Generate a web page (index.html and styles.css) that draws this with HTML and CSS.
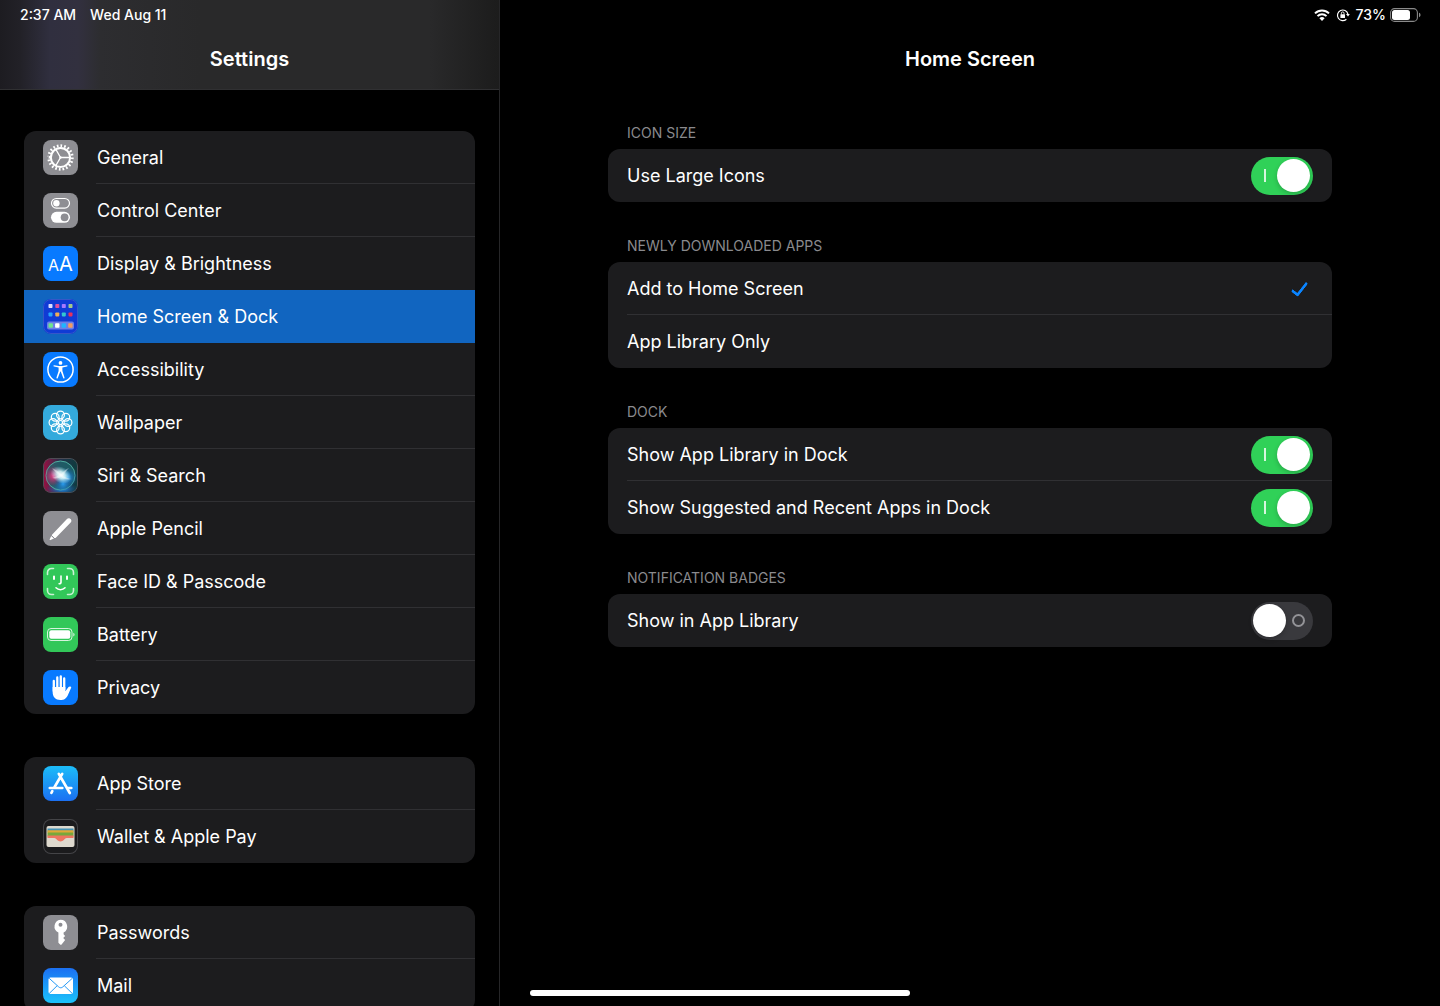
FILE: index.html
```html
<!DOCTYPE html>
<html lang="en">
<head>
  <meta charset="UTF-8">
  <meta name="viewport" content="width=device-width, initial-scale=1.0">
  <title>Settings - Home Screen</title>
  <link rel="stylesheet" href="styles.css">
</head>
<body>
  <div class="app">
    <aside class="sidebar">
      <header class="sidebar-header">
        <div class="status">
          <span>2:37 AM</span>
          <span class="date">Wed Aug 11</span>
        </div>
        <h1>Settings</h1>
      </header>
      <nav class="menu">
        <div class="card">
          <a class="item" href="#general">
            <svg class="icon gray" viewBox="0 0 35 35" fill="none" stroke="#fff">
              <circle cx="17.5" cy="17.5" r="9.6" stroke-width="2"/>
              <circle cx="17.5" cy="17.5" r="11.8" stroke-width="2.8" pathLength="80" stroke-dasharray="1.8 2.2"/>
              <path d="M17.5 17.5H27M17.5 17.5l-4.8-8.3M17.5 17.5l-4.8 8.3" stroke-width="1.3"/>
              <circle cx="17.5" cy="17.5" r="1.2" fill="#fff" stroke="none"/>
            </svg>
            <span class="label">General</span>
          </a>
          <a class="item" href="#control-center">
            <svg class="icon gray" viewBox="0 0 35 35">
              <rect x="8.5" y="5.5" width="18" height="9.6" rx="4.8" fill="none" stroke="#fff" stroke-width="1.2"/>
              <circle cx="13.4" cy="10.3" r="3.2" fill="#fff"/>
              <rect x="8" y="18.8" width="19" height="11" rx="5.5" fill="#fff"/>
              <circle cx="21.6" cy="24.3" r="3.9" fill="#8e8e93"/>
            </svg>
            <span class="label">Control Center</span>
          </a>
          <a class="item" href="#display">
            <span class="icon blue aa" aria-hidden="true"><small>A</small>A</span>
            <span class="label">Display &amp; Brightness</span>
          </a>
          <a class="item active" href="#home-screen" aria-current="page">
            <svg class="icon home" viewBox="0 0 35 35">
              <rect x="4" y="22.5" width="27" height="8" rx="2" fill="#6c7fe6"/>
              <rect x="5.5" y="5" width="4" height="4" rx=".8" fill="#d9dcff"/>
              <rect x="12.3" y="5" width="4" height="4" rx=".8" fill="#e0509c"/>
              <rect x="18.8" y="5" width="4" height="4" rx=".8" fill="#a678ff"/>
              <rect x="25.5" y="5" width="4" height="4" rx=".8" fill="#a3c78a"/>
              <rect x="5.5" y="13.4" width="4" height="4" rx=".8" fill="#24a6ff"/>
              <rect x="12.3" y="13.4" width="4" height="4" rx=".8" fill="#f0ae55"/>
              <rect x="18.8" y="13.4" width="4" height="4" rx=".8" fill="#33c7d0"/>
              <rect x="25.5" y="13.4" width="4" height="4" rx=".8" fill="#e8325c"/>
              <rect x="5.5" y="24.3" width="4.4" height="4.4" rx=".8" fill="#6ee58c"/>
              <rect x="12.1" y="24.3" width="4.4" height="4.4" rx=".8" fill="#fff"/>
              <rect x="18.6" y="24.3" width="4.4" height="4.4" rx=".8" fill="#1fb5ff"/>
              <rect x="25.2" y="24.3" width="4.4" height="4.4" rx=".8" fill="#f29c62"/>
              <rect x=".5" y=".5" width="34" height="34" rx="7.5" fill="none" stroke="#3557c9"/>
            </svg>
            <span class="label">Home Screen &amp; Dock</span>
          </a>
          <a class="item" href="#accessibility">
            <svg class="icon blue" viewBox="0 0 35 35" fill="#fff">
              <circle cx="17.5" cy="17.5" r="12.6" fill="none" stroke="#fff" stroke-width="1.5"/>
              <circle cx="17.5" cy="10.9" r="1.9"/>
              <path d="M11.2 13.2c-.9-.2-1.1 1-.2 1.3l4.6 1.1v3.3l-2.1 6.6c-.3 1 .9 1.4 1.3.4l2.5-6.3h.4l2.5 6.3c.4 1 1.6.6 1.3-.4l-2.1-6.6v-3.3l4.6-1.1c.9-.3.7-1.5-.2-1.3l-4.5.8h-3.6z"/>
            </svg>
            <span class="label">Accessibility</span>
          </a>
          <a class="item" href="#wallpaper">
            <svg class="icon cyan" viewBox="0 0 35 35" fill="none" stroke="#fff" stroke-width="1.2">
              <circle cx="17.5" cy="10" r="3.9"/>
              <circle cx="22.8" cy="12.2" r="3.9"/>
              <circle cx="25" cy="17.5" r="3.9"/>
              <circle cx="22.8" cy="22.8" r="3.9"/>
              <circle cx="17.5" cy="25" r="3.9"/>
              <circle cx="12.2" cy="22.8" r="3.9"/>
              <circle cx="10" cy="17.5" r="3.9"/>
              <circle cx="12.2" cy="12.2" r="3.9"/>
              <circle cx="17.5" cy="17.5" r="2"/>
              <path d="M19 13.800l-.6 1.700M21.200 16l-1.700.6M21.200 19l-1.700-.6M19 21.200l-.6-1.700M16 21.200l.6-1.700M13.800 19l1.700-.6M13.800 16l1.700.6M16 13.800l.6 1.700" stroke-width="1"/>
            </svg>
            <span class="label">Wallpaper</span>
          </a>
          <a class="item" href="#siri">
            <svg class="icon siri" viewBox="0 0 35 35">
              <defs>
                <linearGradient id="siri-bg" x1="0" y1="0" x2="1" y2="0">
                  <stop offset="0" stop-color="#9c0f42"/>
                  <stop offset=".5" stop-color="#23304a"/>
                  <stop offset="1" stop-color="#0d3d3e"/>
                </linearGradient>
                <radialGradient id="siri-pink">
                  <stop offset="0" stop-color="#f0428a"/>
                  <stop offset="1" stop-color="#c01d5f" stop-opacity="0"/>
                </radialGradient>
                <radialGradient id="siri-blue">
                  <stop offset="0" stop-color="#2a9df0"/>
                  <stop offset="1" stop-color="#1256a8" stop-opacity="0"/>
                </radialGradient>
                <radialGradient id="siri-glow">
                  <stop offset="0" stop-color="#fff"/>
                  <stop offset=".4" stop-color="#dff" stop-opacity=".85"/>
                  <stop offset="1" stop-color="#aef" stop-opacity="0"/>
                </radialGradient>
              </defs>
              <rect width="35" height="35" rx="8" fill="url(#siri-bg)"/>
              <ellipse cx="19" cy="31" rx="16" ry="7" fill="url(#siri-blue)"/>
              <circle cx="17.5" cy="17.5" r="14.5" fill="#1f6c72" fill-opacity=".7" stroke="#56b8a8" stroke-width=".9"/>
              <circle cx="10.5" cy="18" r="10" fill="url(#siri-pink)"/>
              <circle cx="24.5" cy="19.5" r="10" fill="url(#siri-blue)"/>
              <circle cx="20" cy="26" r="9" fill="url(#siri-blue)"/>
              <ellipse cx="18" cy="17" rx="11" ry="8" fill="url(#siri-glow)" transform="rotate(30 18 17)"/>
              <path d="M9 10c4 2 8 4 9 7 2-4 5-6 8-7-3 3-5 6-6 8 3 1 6 3 9 3-5 1-9 0-11-2-2 1-5 2-9 1 3-1 6-2 7-3-2-2-5-4-7-7z" fill="#fff" fill-opacity=".4"/>
              <rect x=".5" y=".5" width="34" height="34" rx="7.5" fill="none" stroke="#4d4d55"/>
            </svg>
            <span class="label">Siri &amp; Search</span>
          </a>
          <a class="item" href="#pencil">
            <svg class="icon gray" viewBox="0 0 35 35" fill="#fff">
              <path d="M9 23.7 24.2 7.8c2-2 5.6 1.1 3.7 3.4L12.6 26.9c-1.2 1.1-4.7-2.2-3.6-3.2z"/>
              <path d="m8.2 25 2.8 2.4-3.500 1.700c-.7.2-1-.3-.8-.8z"/>
              <path d="m8.400 24.500 3 2.800" stroke="#8e8e93" stroke-width="1"/>
            </svg>
            <span class="label">Apple Pencil</span>
          </a>
          <a class="item" href="#face-id">
            <svg class="icon green" viewBox="0 0 35 35" fill="none" stroke="#fff" stroke-width="1.6" stroke-linecap="round">
              <path d="M4.5 10.5V8.5a4 4 0 0 1 4-4h2M24.5 4.5h2a4 4 0 0 1 4 4v2M30.5 24.5v2a4 4 0 0 1-4 4h-2M10.5 30.5h-2a4 4 0 0 1-4-4v-2" stroke-opacity=".75"/>
              <path d="M11 12.5v2.500M24 12.500v2.500" stroke-width="2"/>
              <path d="M18 12v6.200c0 1-.6 1.500-1.900 1.500M13 23.800c2.500 2.500 6.500 2.500 9 0"/>
            </svg>
            <span class="label">Face ID &amp; Passcode</span>
          </a>
          <a class="item" href="#battery">
            <svg class="icon green" viewBox="0 0 35 35" fill="#fff">
              <rect x="4.5" y="11.5" width="24.5" height="12" rx="3.5" fill="none" stroke="#fff" stroke-opacity=".8"/>
              <rect x="6.3" y="13.3" width="21" height="8.4" rx="2"/>
              <path d="M30.3 15.7c1.7.5 1.7 3.2 0 3.7z" fill-opacity=".8"/>
            </svg>
            <span class="label">Battery</span>
          </a>
          <a class="item" href="#privacy">
            <svg class="icon blue" viewBox="0 0 35 35">
              <path d="M10.8 11v10M14.3 7.5v11M17.8 6.5v12M21.2 8.5v11" fill="none" stroke="#fff" stroke-width="2.3" stroke-linecap="round"/>
              <path d="M9.65 17h12.7v4.300l3.200-4.200c.9-1.300 3.200-.6 2.600.7l-3 6.600c-1.700 4-4 5.700-7.800 5.700-4.900 0-7.700-3.200-7.700-8z" fill="#fff"/>
            </svg>
            <span class="label">Privacy</span>
          </a>
        </div>
        <div class="card">
          <a class="item" href="#app-store">
            <svg class="icon store" viewBox="0 0 35 35" fill="none" stroke="#fff" stroke-width="2.7" stroke-linecap="round">
              <path d="M15.8 7.8 26.8 27M19.2 7.8 11.6 21M9.300 25.200 8.400 26.800"/>
              <path d="M6.8 22h12.500M24.800 22h3.500"/>
            </svg>
            <span class="label">App Store</span>
          </a>
          <a class="item" href="#wallet">
            <svg class="icon wallet" viewBox="0 0 35 35">
              <rect x="3.5" y="7" width="28" height="21" rx="2" fill="#ded9ce"/>
              <path d="M4.5 9.500h26V13h-26z" fill="#4593b5"/>
              <path d="M4.5 11.300h26v3h-26z" fill="#dfa936"/>
              <path d="M4.5 13.500h26v4h-26z" fill="#76a83c"/>
              <path d="M4.5 16.600h26v2.400h-6.700c-1.700 0-2 1-3 2.100-1.600 1.700-5 1.700-6.600 0-1-1.100-1.300-2.100-3-2.100H4.500z" fill="#ed7561"/>
            </svg>
            <span class="label">Wallet &amp; Apple Pay</span>
          </a>
        </div>
        <div class="card">
          <a class="item" href="#passwords">
            <svg class="icon gray" viewBox="0 0 35 35">
              <path fill="#fff" fill-rule="evenodd" d="M17.5 4.7a6.8 6.8 0 0 1 3.1 12.8v1.700l1.500 1.700-1.900 2 1.900 2.200-3.300 4.200c-.6.8-1.400.7-1.900 0L15.400 27.800V17.600A6.800 6.800 0 0 1 17.500 4.700zm0 3.100a2 2 0 1 0 0 4 2 2 0 0 0 0-4z"/>
            </svg>
            <span class="label">Passwords</span>
          </a>
          <a class="item" href="#mail">
            <svg class="icon mail" viewBox="0 0 35 35">
              <rect x="5.5" y="9.5" width="24.5" height="16.5" rx="2" fill="#fff"/>
              <path d="m6.2 10.300 9.500 8.600c1.300 1.200 2.800 1.200 4.100 0l9.500-8.600M6.200 25.500l8-7.800M29.300 25.500l-8-7.800" fill="none" stroke="#279af5" stroke-width="1"/>
            </svg>
            <span class="label">Mail</span>
          </a>
        </div>
      </nav>
    </aside>

    <main class="content">
      <header class="content-header">
        <div class="status status-right">
          <svg class="wifi" viewBox="0 0 16 12" fill="none" stroke="#fff" stroke-width="2">
            <path d="M1 4.400a10 10 0 0 1 14 0M3.500 7.100a6.400 6.400 0 0 1 9 0"/>
            <path d="M8 12 5.400 9.300a3.700 3.700 0 0 1 5.200 0z" fill="#fff" stroke="none"/>
          </svg>
          <svg class="lock" viewBox="0 0 14 14" fill="none" stroke="#fff" stroke-width="1.200">
            <path d="M10.400 11.200A5.300 5.300 0 1 1 11.900 6"/>
            <path d="m10 6 2 2.600L13.800 6z" fill="#fff" stroke="none"/>
            <rect x="4.400" y="6.300" width="4.600" height="3.600" rx=".5" fill="#fff" stroke="none"/>
            <path d="M5.400 6.500V5.200a1.300 1.300 0 0 1 2.600 0v1.300" stroke-width=".9"/>
          </svg>
          <span>73%</span>
          <svg class="charge" viewBox="0 0 31 14">
            <rect x=".6" y=".6" width="26.800" height="12.800" rx="4" fill="none" stroke="#8a8a8a" stroke-width="1.100"/>
            <rect x="2" y="2" width="18" height="10" rx="2.500" fill="#fff"/>
            <path d="M29 4.800c2 .6 2 3.800 0 4.400z" fill="#8a8a8a"/>
          </svg>
        </div>
        <h2>Home Screen</h2>
      </header>
      <form class="settings">
        <h3>ICON SIZE</h3>
        <div class="card">
          <label class="row">Use Large Icons <input class="toggle" type="checkbox" checked></label>
        </div>
        <h3>NEWLY DOWNLOADED APPS</h3>
        <div class="card">
          <label class="row">Add to Home Screen <input class="check" type="radio" name="new-apps" checked></label>
          <label class="row">App Library Only <input class="check" type="radio" name="new-apps"></label>
        </div>
        <h3>DOCK</h3>
        <div class="card">
          <label class="row">Show App Library in Dock <input class="toggle" type="checkbox" checked></label>
          <label class="row">Show Suggested and Recent Apps in Dock <input class="toggle" type="checkbox" checked></label>
        </div>
        <h3>NOTIFICATION BADGES</h3>
        <div class="card">
          <label class="row">Show in App Library <input class="toggle" type="checkbox"></label>
        </div>
      </form>
    </main>
  </div>
  <div class="home-bar"></div>
</body>
</html>
```
FILE: styles.css
```css
*, *::before, *::after {
  box-sizing: border-box;
}
body {
  margin: 0;
  background: #000;
  color: #fff;
  font-family: Inter, "Liberation Sans", sans-serif;
  font-size: 18px;
}
h1, h2, h3 {
  margin: 0;
}
.app {
  display: flex;
  height: 100vh;
}

/* Headers and status bar */
.status {
  display: flex;
  align-items: center;
  height: 29px;
  padding: 0 19px;
  font-size: 14px;
  font-weight: 500;
}
.sidebar .status {
  padding-left: 20px;
}
.date {
  margin-left: 14px;
}
.status-right {
  justify-content: flex-end;
}
h1, h2 {
  font-size: 20px;
  font-weight: 600;
  line-height: 60px;
  text-align: center;
}
.wifi {
  width: 16px;
  height: 12px;
  margin-right: 6px;
}
.lock {
  width: 14px;
  height: 14px;
  margin-right: 6px;
}
.charge {
  width: 31px;
  height: 14px;
  margin-left: 4px;
}

/* Sidebar */
.sidebar {
  display: flex;
  flex-direction: column;
  flex: 0 0 500px;
  border-right: 1px solid #262628;
}
.sidebar-header {
  flex: none;
  border-bottom: 1px solid #303032;
  background: linear-gradient(90deg, #1d1c21 0, #222127 20px, #302f3f 50px, #32303f 78px, #2d2d30 100px, #29292a 200px, #29292a 430px, #1c1c1c 499px);
}
.menu {
  flex: 1;
  min-height: 0;
  padding: 41px 24px;
  overflow-y: auto;
  scrollbar-width: none;
}
.card {
  border-radius: 12px;
  background: #1c1c1e;
  overflow: hidden;
}
.menu .card + .card {
  margin-top: 43px;
}
.item {
  display: flex;
  align-items: center;
  gap: 18px;
  height: 53px;
  padding-left: 19px;
  color: #fff;
  text-decoration: none;
}
.label {
  flex: 1;
  height: 53px;
  line-height: 54px;
  padding-left: 1px;
  border-bottom: 1px solid #303033;
}
.item:last-child .label,
.item:has(+ .active) .label,
.active .label {
  border-color: transparent;
}
.active {
  background: #1165c0;
}

/* Icon tiles */
.icon {
  flex: none;
  width: 35px;
  height: 35px;
  border-radius: 8px;
}
.gray {
  background: #8e8e93;
}
.blue {
  background: #087aff;
}
.cyan {
  background: #34aadc;
}
.green {
  background: #32c759;
}
.home {
  background: #103bd5;
}
.store {
  background: linear-gradient(#1cbdf9, #1b70f2);
}
.wallet {
  background: #1b1b1d;
  box-shadow: inset 0 0 0 1px #444447;
}
.mail {
  background: linear-gradient(#1c70f2, #1bc3fb);
}
.aa {
  display: flex;
  align-items: baseline;
  justify-content: center;
  font-size: 20px;
  line-height: 36px;
}
.aa small {
  font-size: 16px;
}

/* Detail pane */
.content {
  flex: 1;
  min-width: 0;
}
.settings {
  max-width: 724px;
  margin: 0 auto;
}
h3 {
  height: 60px;
  padding: 36px 19px 0;
  color: #8a8a8e;
  font-size: 14px;
  font-weight: 400;
  line-height: 16px;
}
.row {
  display: flex;
  align-items: center;
  justify-content: space-between;
  height: 53px;
  padding: 0 19px;
}
.row:not(:last-child) {
  background: linear-gradient(#303033, #303033) 19px 100% / 100% 1px no-repeat;
}
.toggle {
  appearance: none;
  display: flex;
  align-items: center;
  justify-content: space-between;
  flex-direction: row-reverse;
  width: 62px;
  height: 38px;
  margin: 0;
  padding: 0 8px 0 2px;
  border-radius: 19px;
  background: #39393d;
}
.toggle::before {
  content: "";
  width: 13px;
  height: 13px;
  border: 2px solid #929296;
  border-radius: 50%;
}
.toggle::after {
  content: "";
  width: 33px;
  height: 33px;
  border-radius: 50%;
  background: #fff;
  box-shadow: 0 2px 5px rgba(0,0,0,0.2);
}
.toggle:checked {
  flex-direction: row;
  padding: 0 3px 0 13px;
  background: #30d158;
}
.toggle:checked::before {
  width: 2px;
  height: 13px;
  border: none;
  border-radius: 0;
  background: #d6f6de;
}
.check {
  appearance: none;
  display: flex;
  align-items: flex-start;
  justify-content: center;
  width: 18px;
  height: 20px;
  margin: 0 5px 0 0;
}
.check:checked::before {
  content: "";
  width: 9px;
  height: 17px;
  border: solid #0a84ff;
  border-width: 0 3px 3px 0;
  border-radius: 2px;
  transform: rotate(38deg);
}

.home-bar {
  position: absolute;
  bottom: 10px;
  left: 50%;
  width: 380px;
  height: 6px;
  border-radius: 3px;
  background: #fff;
  transform: translateX(-50%);
}
```
